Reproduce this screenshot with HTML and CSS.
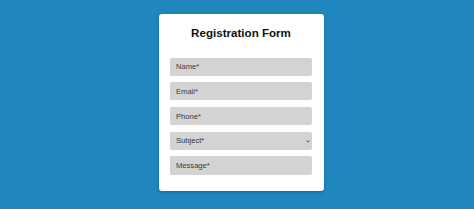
FILE: index.html
```html
<!DOCTYPE html>
<html lang="en">
<head>
  <meta charset="UTF-8">
  <title>Registration Form</title>
  <link rel="stylesheet" href="styles.css">
</head>
<body>
<div class="page">
  <form class="card">
    <h2 class="title">Registration Form</h2>
    <div class="fields">
      <input class="field" type="text" placeholder="Name*">
      <input class="field" type="email" placeholder="Email*">
      <input class="field" type="tel" placeholder="Phone*">
      <div class="select-wrap">
        <select class="field select">
          <option>Subject*</option>
        </select>
        <svg class="chevron" width="4" height="3" viewBox="0 0 4 3"><path d="M0.4 0.6 L2 2.2 L3.6 0.6" fill="none" stroke="#444" stroke-width="0.9"/></svg>
      </div>
      <input class="field" type="text" placeholder="Message*">
    </div>
  </form>
</div>
</body>
</html>
```

FILE: styles.css
```css
html, body {
    width: 100%;
    height: 100%;
    margin: 0;
    padding: 0;
    overflow: hidden;
    background: #1f87bd;
    font-family: "Liberation Sans", Arial, sans-serif;
}

.page {
    height: 100%;
    padding: 14px 0 0 9px;
    box-sizing: border-box;

    display: flex;
    justify-content: center;
    align-items: flex-start;
}

.card {
    width: 165px;
    height: 177px;
    padding: 12px 12px 0 11px;
    box-sizing: border-box;
    background: #fff;
    border-radius: 3px;
    box-shadow: 0 1px 3px rgba(0, 0, 0, 0.25);
}

.title {
    margin: 0 0 17.5px;
    font-size: 11.6px;
    line-height: 14px;
    font-weight: bold;
    text-align: center;
    color: #111;
}

.fields {
    display: flex;
    flex-direction: column;
    gap: 6.4px;
}

.field {
    width: 100%;
    height: 18.3px;
    margin: 0;
    padding: 0 0 0 6px;
    box-sizing: border-box;
    border: none;
    border-radius: 2px;
    background: #d3d3d3;
    font-family: inherit;
    font-size: 7.6px;
    color: #333;
    outline: none;
}

.field::placeholder {
    color: #3a3a3a;
}

.select-wrap {
    position: relative;
}

.select {
    display: block;
    -webkit-appearance: none;
    appearance: none;
    padding-left: 6px;
}

.chevron {
    position: absolute;
    right: 2px;
    top: 8px;
}
```
